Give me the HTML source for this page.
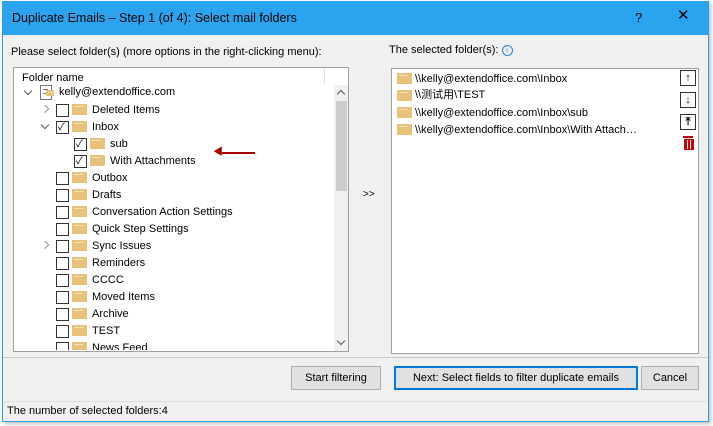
<!DOCTYPE html><html><head><style>
body{margin:0;width:713px;height:426px;background:#fff;font-family:"Liberation Sans","Noto Sans CJK SC",sans-serif;font-size:11px;line-height:13px;color:#000;position:relative;overflow:hidden}
.a{position:absolute;white-space:nowrap}
#win{position:absolute;left:2px;top:1px;width:705px;height:419px;background:#f0f0f0;border:1px solid #2a9fe8;box-shadow:2px 2px 4px rgba(0,0,0,.25)}
#title{position:absolute;left:0;top:0;width:705px;height:33px;background:#2aa4ee;font-size:12.5px}
.box{position:absolute;background:#fff;border:1px solid #a0a0a0}
.cb{position:absolute;width:11px;height:11px;border:1px solid #333;background:#fff}
.fd{position:absolute;width:15px;height:11px;background:#e8c27a}
.fd::after{content:"";position:absolute;left:2px;top:2px;width:9px;height:1px;background:#f6e2b8}
.btn{position:absolute;height:22px;background:#e1e1e1;border:1px solid #adadad;text-align:center;line-height:22px}
.sb{position:absolute;width:14px;height:14px;border:1px solid #333;background:#fff;font-size:11px;text-align:center;line-height:14px;font-weight:bold}
.ck{position:absolute;left:1px;top:-1px;font-size:10px}
.chev{position:absolute;width:5px;height:5px;border-right:1.5px solid #555;border-bottom:1.5px solid #555}
</style></head><body>
<div id="win">
<div id="title"><span class="a" style="left:9px;top:10px">Duplicate Emails – Step 1 (of 4): Select mail folders</span><span class="a" style="left:632px;top:9px;font-size:13px">?</span><span class="a" style="left:674px;top:7px;font-size:15px">✕</span></div>
<span class="a" style="left:8px;top:44px">Please select folder(s) (more options in the right-clicking menu):</span>
<span class="a" style="left:386px;top:42px">The selected folder(s): <span style="display:inline-block;width:9px;height:9px;border:1px solid #2a7fd4;border-radius:50%;color:#2a7fd4;font-size:7px;text-align:center;line-height:9px;vertical-align:middle">i</span></span>
<div class="box" style="left:10px;top:65px;width:334px;height:283px;overflow:hidden">
<span class="a" style="left:8px;top:4px">Folder name</span>
<div class="a" style="left:310px;top:0;width:1px;height:16px;background:#ddd"></div>
<div class="a" style="left:320px;top:17px;width:14px;height:266px;background:#f0f0f0"></div>
<div class="a" style="left:322px;top:33px;width:11px;height:90px;background:#cdcdcd"></div>
<div class="chev" style="left:324px;top:23px;transform:rotate(-135deg)"></div>
<div class="chev" style="left:324px;top:270px;transform:rotate(45deg)"></div>
</div>
<div class="box" style="left:388px;top:66px;width:306px;height:284px"></div>
<span class="a" style="left:360px;top:186px;font-size:10px">&gt;&gt;</span>
<div class="sb" style="left:677px;top:68px">↑</div><div class="sb" style="left:677px;top:90px">↓</div><div class="sb" style="left:677px;top:112px">⤒</div>
<div class="a" style="left:680px;top:134px;width:10px;height:2px;background:#c00"></div>
<div class="a" style="left:681px;top:137px;width:8px;height:9px;border:1px solid #c00;background:repeating-linear-gradient(90deg,#c00 0 2px,#fff 2px 3px)"></div>
<div class="a" style="left:0;top:355px;width:705px;height:1px;background:#c8c8c8"></div>
<div class="btn" style="left:288px;top:364px;width:88px">Start filtering</div>
<div class="btn" style="left:391px;top:364px;width:240px;border:2px solid #0078d7;height:20px;line-height:20px">Next: Select fields to filter duplicate emails</div>
<div class="btn" style="left:638px;top:364px;width:56px">Cancel</div>
<div class="a" style="left:0;top:399px;width:705px;height:1px;background:#ddd"></div>
<span class="a" style="left:4px;top:403px">The number of selected folders:4</span>
</div>
<div class="chev" style="left:25px;top:88px;transform:rotate(45deg)"></div>
<div class="a" style="left:40px;top:85px;width:10px;height:13px;border:1px solid #777;background:#fff"><div class="a" style="left:2px;top:3px;width:5px;height:1px;background:#777"></div><div class="a" style="left:2px;top:7px;width:5px;height:1px;background:#777"></div></div>
<div class="fd" style="left:46px;top:90px;width:8px;height:6px"></div>
<span class="a" style="left:59px;top:86px">kelly@extendoffice.com</span>
<div class="chev" style="left:42px;top:106px;transform:rotate(-45deg);border-color:#999"></div><div class="cb" style="left:56px;top:104px"></div><div class="fd" style="left:72px;top:104px"></div><span class="a" style="left:92px;top:104px">Deleted Items</span>
<div class="chev" style="left:42px;top:122px;transform:rotate(45deg)"></div><div class="cb" style="left:56px;top:121px"><span class="ck">✓</span></div><div class="fd" style="left:72px;top:121px"></div><span class="a" style="left:92px;top:121px">Inbox</span>
<div class="cb" style="left:74px;top:138px"><span class="ck">✓</span></div><div class="fd" style="left:90px;top:138px"></div><span class="a" style="left:110px;top:138px">sub</span>
<div class="cb" style="left:74px;top:155px"><span class="ck">✓</span></div><div class="fd" style="left:90px;top:155px"></div><span class="a" style="left:110px;top:155px">With Attachments</span>
<div class="a" style="left:222px;top:152px;width:33px;height:2px;background:#a00"></div><span class="a" style="left:213px;top:146px;color:#a00;font-size:10px">◀</span>
<div class="cb" style="left:56px;top:172px"></div><div class="fd" style="left:72px;top:172px"></div><span class="a" style="left:92px;top:172px">Outbox</span>
<div class="cb" style="left:56px;top:189px"></div><div class="fd" style="left:72px;top:189px"></div><span class="a" style="left:92px;top:189px">Drafts</span>
<div class="cb" style="left:56px;top:206px"></div><div class="fd" style="left:72px;top:206px"></div><span class="a" style="left:92px;top:206px">Conversation Action Settings</span>
<div class="cb" style="left:56px;top:223px"></div><div class="fd" style="left:72px;top:223px"></div><span class="a" style="left:92px;top:223px">Quick Step Settings</span>
<div class="chev" style="left:42px;top:242px;transform:rotate(-45deg);border-color:#999"></div><div class="cb" style="left:56px;top:240px"></div><div class="fd" style="left:72px;top:240px"></div><span class="a" style="left:92px;top:240px">Sync Issues</span>
<div class="cb" style="left:56px;top:257px"></div><div class="fd" style="left:72px;top:257px"></div><span class="a" style="left:92px;top:257px">Reminders</span>
<div class="cb" style="left:56px;top:274px"></div><div class="fd" style="left:72px;top:274px"></div><span class="a" style="left:92px;top:274px">CCCC</span>
<div class="cb" style="left:56px;top:291px"></div><div class="fd" style="left:72px;top:291px"></div><span class="a" style="left:92px;top:291px">Moved Items</span>
<div class="cb" style="left:56px;top:308px"></div><div class="fd" style="left:72px;top:308px"></div><span class="a" style="left:92px;top:308px">Archive</span>
<div class="cb" style="left:56px;top:325px"></div><div class="fd" style="left:72px;top:325px"></div><span class="a" style="left:92px;top:325px">TEST</span>
<div style="position:absolute;left:50px;top:339px;width:100px;height:11px;overflow:hidden"><div class="cb" style="left:6px;top:3px"></div><div class="fd" style="left:22px;top:3px"></div><span class="a" style="left:42px;top:3px">News Feed</span></div>
<div class="fd" style="left:397px;top:73px"></div><span class="a" style="left:415px;top:73px">\\kelly@extendoffice.com\Inbox</span>
<div class="fd" style="left:397px;top:90px"></div><span class="a" style="left:415px;top:89px">\\测试用\TEST</span>
<div class="fd" style="left:397px;top:107px"></div><span class="a" style="left:415px;top:107px">\\kelly@extendoffice.com\Inbox\sub</span>
<div class="fd" style="left:397px;top:124px"></div><span class="a" style="left:415px;top:124px">\\kelly@extendoffice.com\Inbox\With Attach…</span>
</body></html>
